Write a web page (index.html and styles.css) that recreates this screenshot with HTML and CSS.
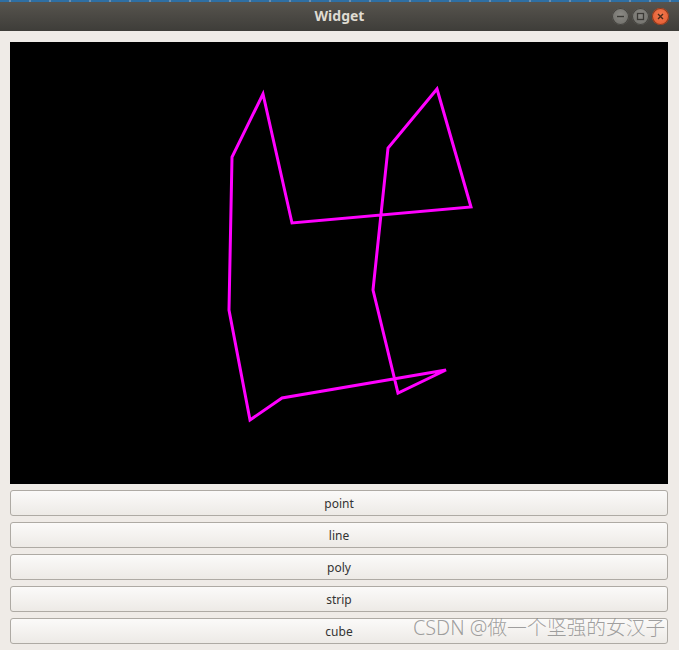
FILE: index.html
```html
<!DOCTYPE html>
<html>
<head>
<meta charset="utf-8">
<link rel="stylesheet" href="styles.css">
</head>
<body>
<div class="desktop"></div>
<div class="window">
  <div class="titlebar">
    <span class="title">Widget</span>
    <div class="controls">
      <span class="wbtn min"><svg width="17" height="17" viewBox="0 0 17 17"><line x1="5" y1="8.5" x2="12" y2="8.5" stroke="#3a3935" stroke-width="1.4"/></svg></span>
      <span class="wbtn max"><svg width="17" height="17" viewBox="0 0 17 17"><rect x="5.5" y="5.5" width="6" height="6" fill="none" stroke="#3a3935" stroke-width="1.3"/></svg></span>
      <span class="wbtn close"><svg width="17" height="17" viewBox="0 0 17 17"><path d="M6 6 L11 11 M11 6 L6 11" stroke="#4a2a1a" stroke-width="1.4"/></svg></span>
    </div>
  </div>
  <div class="body">
    <div class="canvas">
      <svg width="658" height="442" viewBox="0 0 658 442">
        <polygon points="253,52 222,115 219,268 240,378 272,356 436,328 388,351 363,248 378,106 427,47 461,165 282,181" fill="none" stroke="#ff00ff" stroke-width="3" stroke-linejoin="miter"/>
      </svg>
    </div>
    <div class="buttons">
      <button class="btn">point</button>
      <button class="btn">line</button>
      <button class="btn">poly</button>
      <button class="btn">strip</button>
      <button class="btn">cube</button>
    </div>
  </div>
  <div class="watermark">CSDN @做一个坚强的女汉子</div>
</div>
</body>
</html>
```
FILE: styles.css
```css
html, body {
  margin: 0;
  padding: 0;
  width: 679px;
  height: 650px;
  overflow: hidden;
  background: #efebe7;
}
.desktop {
  height: 2px;
  background: repeating-linear-gradient(90deg, #2f6fa3 0 9px, #6b8fb0 9px 11px, #2f6fa3 11px 20px);
}
.window {
  position: relative;
}
.titlebar {
  height: 29px;
  background: linear-gradient(#57544e, #3e3d39);
  display: flex;
  align-items: center;
  justify-content: center;
  position: relative;
}
.title {
  font-family: "Noto Sans", "DejaVu Sans", sans-serif;
  font-weight: bold;
  font-size: 14px;
  color: #dfdbd2;
  margin-top: -2px;
}
.controls {
  position: absolute;
  right: 10px;
  top: 6px;
  display: flex;
  gap: 3px;
}
.wbtn {
  width: 17px;
  height: 17px;
  border-radius: 50%;
  display: block;
}
.wbtn svg { display: block; }
.wbtn.min, .wbtn.max {
  background: radial-gradient(circle at 50% 40%, #8b8a85, #6a6964);
  box-shadow: inset 0 0 0 1px #44433f;
}
.wbtn.close {
  background: radial-gradient(circle at 50% 40%, #f37a4f, #e0542a);
  box-shadow: inset 0 0 0 1px #8a3a1e;
}
.body {
  padding: 11px 11px 0 10px;
  display: flex;
  flex-direction: column;
  gap: 6px;
}
.canvas {
  height: 442px;
  background: #000;
}
.canvas svg { display: block; }
.buttons {
  display: flex;
  flex-direction: column;
  gap: 6px;
}
.btn {
  height: 26px;
  margin: 0;
  padding: 0;
  border: 1px solid #aeaaa4;
  border-radius: 3px;
  background: linear-gradient(#fbfaf9, #edeae6);
  font-family: "Noto Sans", "DejaVu Sans", sans-serif;
  font-size: 12px;
  color: #333;
  text-align: center;
}
.watermark {
  position: absolute;
  left: 413px;
  top: 614px;
  font-family: "Noto Sans", "Noto Sans CJK SC", sans-serif;
  font-size: 19.8px;
  font-weight: 300;
  color: rgba(120, 120, 120, 0.7);
  white-space: nowrap;
  line-height: 24px;
}
```
